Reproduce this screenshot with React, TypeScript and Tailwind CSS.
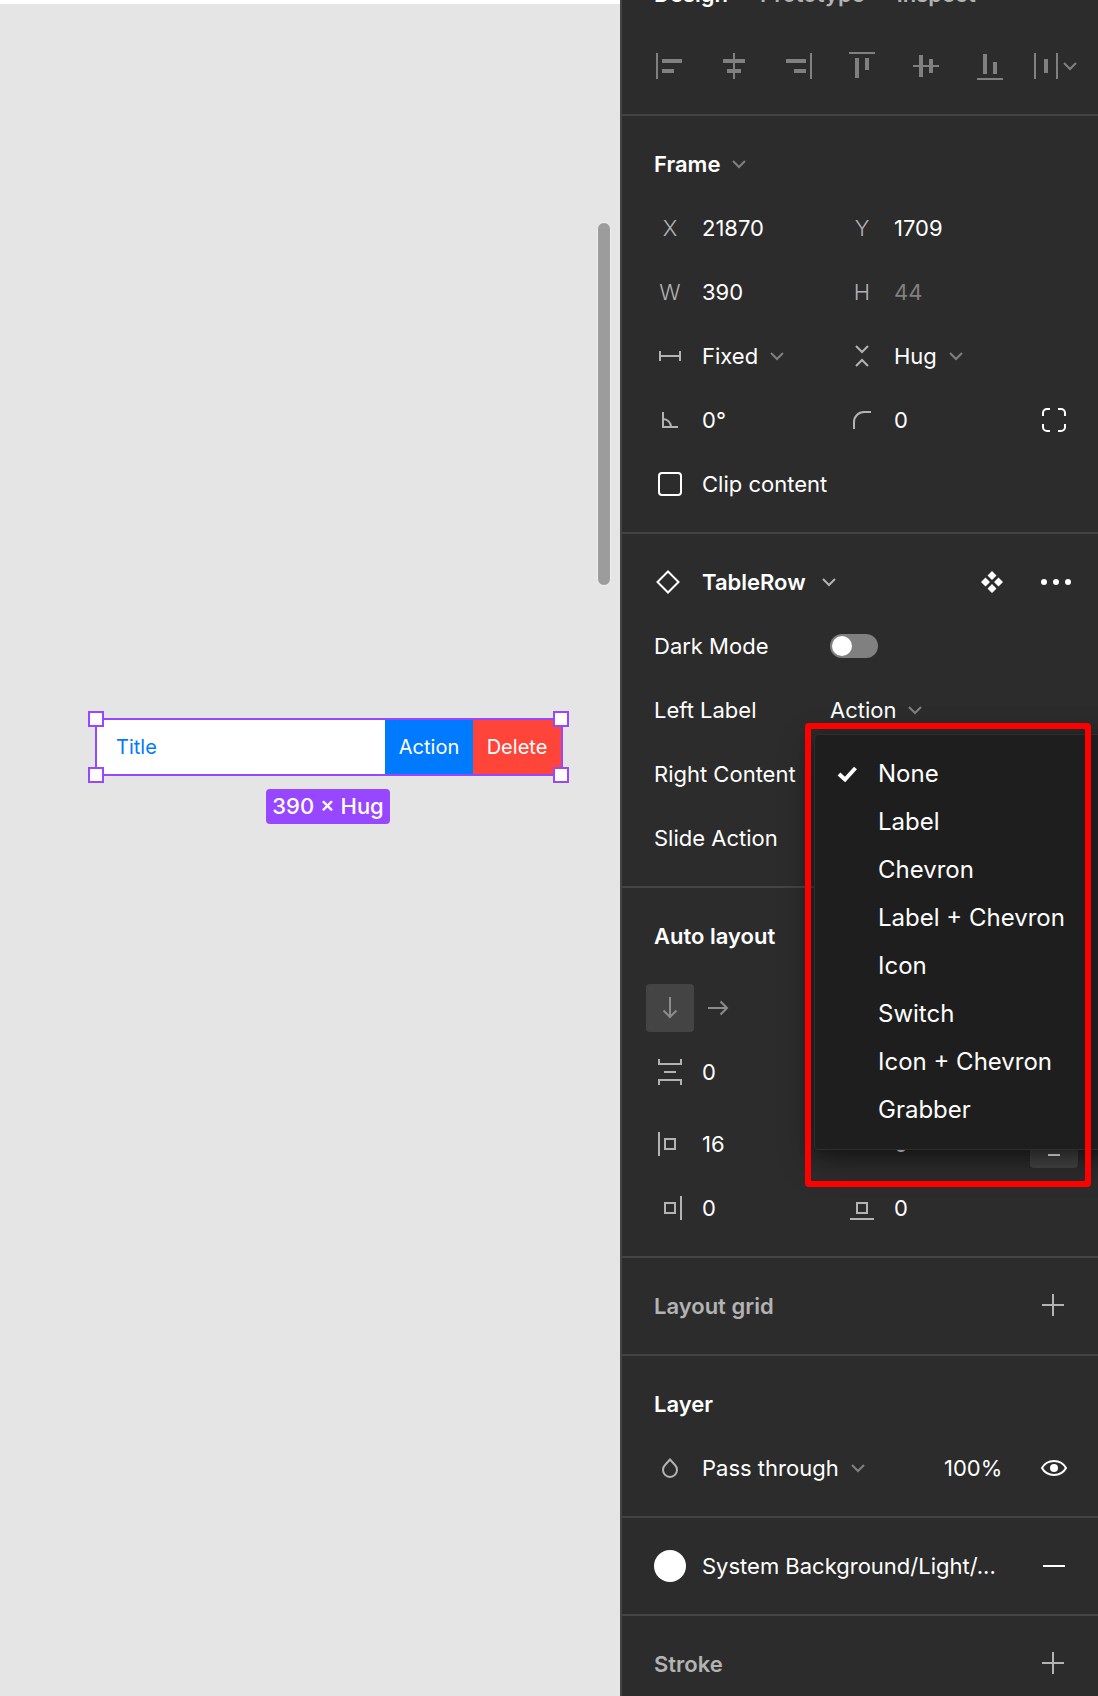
import type { ReactNode } from "react";

const menuItems = [
    "None",
    "Label",
    "Chevron",
    "Label + Chevron",
    "Icon",
    "Switch",
    "Icon + Chevron",
    "Grabber",
];

const alignIcons = [
    { label: "Align left", path: "M18 19h2v26h-2zM24 25h20v4H24zM24 35h12v4H24z" },
    { label: "Align horizontal centers", path: "M31 19h2v26h-2zM21 25h22v4H21zM25 35h14v4H25z" },
    { label: "Align right", path: "M44 19h2v26h-2zM20 25h20v4H20zM28 35h12v4H28z" },
    { label: "Align top", path: "M19 18h26v2H19zM25 24h4v20h-4zM35 24h4v12h-4z" },
    { label: "Align vertical centers", path: "M19 31h26v2H19zM25 21h4v22h-4zM35 25h4v14h-4z" },
    { label: "Align bottom", path: "M19 44h26v2H19zM25 20h4v20h-4zM35 28h4v12h-4z" },
];

function Icon({ d, className = "text-[#b3b3b3]" }: { d: string; className?: string }) {
    return (
        <svg
            viewBox="0 0 64 64"
            className={`size-16 shrink-0 ${className}`}
            fill="none"
            stroke="currentColor"
            strokeWidth="2"
            aria-hidden="true"
        >
            <path d={d} />
        </svg>
    );
}

function Chevron({ className = "text-[#808080]" }: { className?: string }) {
    return (
        <svg
            viewBox="0 0 14 10"
            className={`pointer-events-none h-[10px] w-[14px] shrink-0 ${className}`}
            fill="none"
            stroke="currentColor"
            strokeWidth="2"
            aria-hidden="true"
        >
            <path d="M1 2l6 6 6-6" />
        </svg>
    );
}

function Section({ children, last = false }: { children: ReactNode; last?: boolean }) {
    return (
        <section className={last ? "pt-4 pr-3 pl-4" : "border-b-2 border-[#444444] py-4 pr-3 pl-4"}>
            {children}
        </section>
    );
}

interface FieldProps {
    label: string;
    value: string;
    letter?: string;
    icon?: string;
    muted?: boolean;
}

function Field({ label, value, letter, icon, muted = false }: FieldProps) {
    return (
        <label className="flex h-16 w-48 items-center">
            {letter ? (
                <span className="w-16 text-center font-light text-[#b3b3b3]">{letter}</span>
            ) : (
                <Icon d={icon ?? ""} />
            )}
            <input
                type="text"
                aria-label={label}
                defaultValue={value}
                className={`w-28 bg-transparent outline-none ${muted ? "text-[#808080]" : "text-white"}`}
            />
        </label>
    );
}

function Dropdown({ label, options }: { label: string; options: string[] }) {
    return (
        <span className="flex items-center gap-3">
            <select
                aria-label={label}
                defaultValue={options[0]}
                className="field-sizing-content appearance-none bg-transparent outline-none"
            >
                {options.map((option) => (
                    <option key={option}>{option}</option>
                ))}
            </select>
            <Chevron />
        </span>
    );
}

function PropertyRow({ label, htmlFor, children }: { label: string; htmlFor?: string; children?: ReactNode }) {
    return (
        <div className="relative flex h-16 items-center pl-4">
            <label htmlFor={htmlFor} className="w-44 whitespace-nowrap">
                {label}
            </label>
            {children}
        </div>
    );
}

function VariantMenu() {
    return (
        <>
            <ul
                role="listbox"
                aria-label="Right Content"
                className="absolute -top-2 left-44 z-10 w-80 rounded-sm border border-[#2e2e2e] bg-[#1e1e1e] py-[15px] text-[24px] shadow-[0_10px_34px_rgba(0,0,0,0.4),0_4px_14px_rgba(0,0,0,0.3)]"
            >
                {menuItems.map((item, index) => (
                    <li key={item} role="option" aria-selected={index === 0}>
                        <button type="button" className="flex h-12 w-full items-center">
                            <span className="flex w-[63px] justify-center">
                                {index === 0 && (
                                    <svg viewBox="0 0 20 16" className="h-4 w-5" fill="none" stroke="white" strokeWidth="4" aria-hidden="true">
                                        <path d="M2 8l6 5.5L18.500 2" />
                                    </svg>
                                )}
                            </span>
                            {item}
                        </button>
                    </li>
                ))}
            </ul>
            <div className="pointer-events-none absolute -top-[19px] left-[167px] z-20 h-[464px] w-[286px] rounded-sm border-6 border-[#ff0000]" />
        </>
    );
}

function Handle({ className }: { className: string }) {
    return <span className={`absolute size-4 border-2 border-[#9747ff] bg-white ${className}`} />;
}

function Canvas() {
    return (
        <main className="relative flex-1 border-t-4 border-white bg-[#e5e5e5]">
            <div className="absolute top-[714px] left-[95px] h-[58px] w-[468px] border-2 border-[#9747ff] bg-white text-[20px]">
                <div className="flex h-full items-center">
                    <span className="flex-1 pl-[19px] text-[#007aff]">Title</span>
                    <button type="button" className="h-full w-[88px] bg-[#007aff] text-white">
                        Action
                    </button>
                    <button type="button" className="h-full w-[88px] bg-[#ff453a] text-white">
                        Delete
                    </button>
                </div>
                <Handle className="-top-[9px] -left-[9px]" />
                <Handle className="-top-[9px] -right-[8px]" />
                <Handle className="-bottom-[9px] -left-[9px]" />
                <Handle className="-right-[8px] -bottom-[9px]" />
            </div>
            <div className="absolute top-[785px] left-[266px] flex h-[35px] w-[124px] items-center justify-center rounded bg-[#9747ff] text-[22px] font-medium whitespace-nowrap text-white">
                390 × Hug
            </div>
            <div className="absolute top-[218px] right-[9px] h-[364px] w-[14px] rounded-full border border-[#f0f0f0] bg-[#9c9c9c]" />
        </main>
    );
}

function AddRow({ title }: { title: string }) {
    return (
        <div className="flex h-16 items-center justify-between pl-4">
            <h2 className="font-semibold text-[#b3b3b3]">{title}</h2>
            <button type="button" aria-label={`Add ${title}`}>
                <Icon d="M20 31h22M31 20v22" />
            </button>
        </div>
    );
}

function Inspector() {
    return (
        <aside className="w-[478px] shrink-0 overflow-hidden border-l-2 border-[#444444] bg-[#2c2c2c] text-[22px] leading-8 text-white">
            <nav className="-mt-[46px] flex h-20 items-center gap-8 pl-8 font-semibold text-[#b3b3b3]">
                <button type="button" className="text-white">Design</button>
                <button type="button">Prototype</button>
                <button type="button">Inspect</button>
            </nav>

            <div className="flex border-b-2 border-[#444444] pb-4 pl-4">
                {alignIcons.map((icon) => (
                    <button type="button" key={icon.label} aria-label={icon.label}>
                        <svg viewBox="0 0 64 64" className="size-16" fill="#808080" aria-hidden="true">
                            <path d={icon.path} />
                        </svg>
                    </button>
                ))}
                <button type="button" aria-label="Distribute">
                    <svg viewBox="0 0 64 64" className="size-16" fill="#808080" aria-hidden="true">
                        <path d="M12 19h2v26h-2zM34 19h2v26h-2zM22 25h4v14h-4z" />
                        <path d="M42 29l6 6 6-6" fill="none" stroke="#808080" strokeWidth="2" />
                    </svg>
                </button>
            </div>

            <Section>
                <button type="button" className="flex h-16 items-center gap-3 pl-4 font-semibold">
                    Frame
                    <Chevron />
                </button>
                <div className="flex">
                    <Field label="X" letter="X" value="21870" />
                    <Field label="Y" letter="Y" value="1709" />
                </div>
                <div className="flex">
                    <Field label="Width" letter="W" value="390" />
                    <Field label="Height" letter="H" value="44" muted />
                </div>
                <div className="flex">
                    <div className="flex h-16 w-48 items-center">
                        <Icon d="M22 27v10M42 27v10M22 32h20" />
                        <Dropdown label="Horizontal resizing" options={["Fixed", "Hug"]} />
                    </div>
                    <div className="flex h-16 w-48 items-center">
                        <Icon d="M26 22l6 6 6-6M26 42l6-6 6 6" />
                        <Dropdown label="Vertical resizing" options={["Hug", "Fixed"]} />
                    </div>
                </div>
                <div className="flex">
                    <Field label="Rotation" icon="M25 24v15h15M25 31a8 8 0 0 1 8 8" value="0°" />
                    <Field label="Corner radius" icon="M24 41v-7a10 10 0 0 1 10-10h7" value="0" />
                    <button type="button" aria-label="Independent corners">
                        <Icon
                            d="M21 28v-3a4 4 0 0 1 4-4h3M36 21h3a4 4 0 0 1 4 4v3M43 36v3a4 4 0 0 1-4 4h-3M28 43h-3a4 4 0 0 1-4-4v-3"
                            className="text-white"
                        />
                    </button>
                </div>
                <label className="flex h-16 items-center gap-5 pl-5">
                    <input type="checkbox" className="size-6 appearance-none rounded border-2 border-white" />
                    Clip content
                </label>
            </Section>

            <Section>
                <div className="flex h-16 items-center">
                    <Icon d="M30 21.500L40.500 32 30 42.500 19.500 32z" className="text-white" />
                    <button type="button" className="flex flex-1 items-center gap-4 font-semibold">
                        TableRow
                        <Chevron className="text-[#b3b3b3]" />
                    </button>
                    <button type="button" aria-label="Go to main component">
                        <svg viewBox="0 0 64 64" className="size-16" fill="white" aria-hidden="true">
                            <path d="M34 21l4.500 4.500L34 30l-4.500-4.500zM34 34l4.500 4.500L34 43l-4.500-4.500zM27.500 27.500L32 32l-4.500 4.500L23 32zM40.500 27.500L45 32l-4.500 4.500L36 32z" />
                        </svg>
                    </button>
                    <button type="button" aria-label="More options">
                        <svg viewBox="0 0 64 64" className="size-16" fill="white" aria-hidden="true">
                            <circle cx="22" cy="32" r="3" />
                            <circle cx="34" cy="32" r="3" />
                            <circle cx="46" cy="32" r="3" />
                        </svg>
                    </button>
                </div>
                <PropertyRow label="Dark Mode" htmlFor="dark-mode">
                    <input
                        id="dark-mode"
                        type="checkbox"
                        role="switch"
                        className="flex h-6 w-12 appearance-none items-center rounded-full bg-[#808080] px-0.5 before:size-5 before:rounded-full before:bg-white checked:justify-end"
                    />
                </PropertyRow>
                <PropertyRow label="Left Label">
                    <Dropdown label="Left Label" options={["Action", "None"]} />
                </PropertyRow>
                <PropertyRow label="Right Content">
                    <VariantMenu />
                </PropertyRow>
                <PropertyRow label="Slide Action" />
            </Section>

            <Section>
                <h2 className="flex h-16 items-center pl-4 font-semibold">Auto layout</h2>
                <div className="flex h-[72px] items-end pb-2 pl-2">
                    <button type="button" aria-label="Vertical" className="flex size-12 items-center justify-center rounded bg-[#444444]">
                        <svg viewBox="0 0 24 24" className="size-6" fill="none" stroke="#8c8c8c" strokeWidth="2" aria-hidden="true">
                            <path d="M12 1v20M5.500 14.500L12 21l6.500-6.500" />
                        </svg>
                    </button>
                    <button type="button" aria-label="Horizontal" className="flex size-12 items-center justify-center">
                        <svg viewBox="0 0 24 24" className="size-6" fill="none" stroke="#8c8c8c" strokeWidth="2" aria-hidden="true">
                            <path d="M2 12h19M14.500 5.500L21 12l-6.500 6.500" />
                        </svg>
                    </button>
                </div>
                <Field label="Spacing between items" icon="M21 19v5h22v-5M26 32h12M21 45v-5h22v5" value="0" />
                <div className="mt-2 flex items-center">
                    <Field label="Left padding" icon="M21 20v24M27 27h10v10H27z" value="16" />
                    <Field label="Top padding" icon="M20 21h24M27 27h10v10H27z" value="0" />
                    <button type="button" aria-label="Independent padding" className="ml-2 flex size-12 items-center justify-center rounded bg-[#444444]">
                        <svg viewBox="0 0 24 24" className="size-6" fill="none" stroke="white" strokeWidth="2" aria-hidden="true">
                            <path d="M6 1h12M6 23h12M1 6v12M23 6v12" />
                        </svg>
                    </button>
                </div>
                <div className="flex">
                    <Field label="Right padding" icon="M43 20v24M27 27h10v10H27z" value="0" />
                    <Field label="Bottom padding" icon="M20 43h24M27 27h10v10H27z" value="0" />
                </div>
            </Section>

            <Section>
                <AddRow title="Layout grid" />
            </Section>

            <Section>
                <h2 className="flex h-16 items-center pl-4 font-semibold">Layer</h2>
                <div className="flex h-16 items-center">
                    <Icon d="M32 23.500l-5 5.500a7 7 0 1 0 10 0z" />
                    <Dropdown label="Blend mode" options={["Pass through", "Normal"]} />
                    <input
                        type="text"
                        aria-label="Opacity"
                        defaultValue="100%"
                        className="ml-auto w-[78px] bg-transparent outline-none"
                    />
                    <button type="button" aria-label="Toggle visibility">
                        <svg viewBox="0 0 64 64" className="size-16" fill="none" stroke="white" strokeWidth="2" aria-hidden="true">
                            <path d="M20 32c2.500-4.500 7-7 12-7s9.500 2.500 12 7c-2.500 4.500-7 7-12 7s-9.500-2.500-12-7z" />
                            <circle cx="32" cy="32" r="4" fill="white" stroke="none" />
                        </svg>
                    </button>
                </div>
            </Section>

            <Section>
                <div className="flex h-16 items-center pl-4">
                    <span className="mr-4 size-8 rounded-full bg-white" />
                    <span className="flex-1">System Background/Light/...</span>
                    <button type="button" aria-label="Remove fill">
                        <Icon d="M21 32h22" className="text-white" />
                    </button>
                </div>
            </Section>

            <Section last>
                <AddRow title="Stroke" />
            </Section>
        </aside>
    );
}

export default function App() {
    return (
        <div className="flex min-h-screen overflow-hidden font-[Inter,sans-serif]">
            <Canvas />
            <Inspector />
        </div>
    );
}
